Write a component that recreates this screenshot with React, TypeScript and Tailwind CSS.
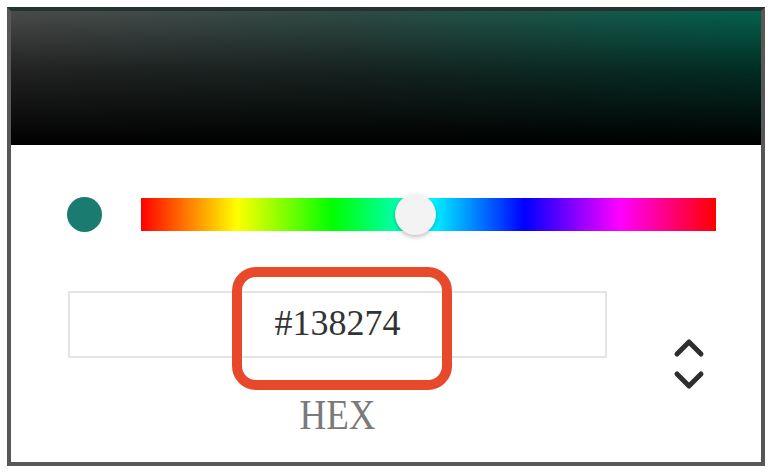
import React from "react";

export default function App() {
  return (
    <div className="relative w-[768px] h-[473px] bg-white overflow-hidden">
      <div className="ml-[7px] mt-[7px] w-[758px] h-[459px] border-4 border-[#575757] border-t-[#263230] flex flex-col">
        <div className="relative h-[134px] bg-[linear-gradient(to_right,#4a4a4a,#2f4a44_45%,#03614c)]">
          <div className="absolute inset-0 bg-[linear-gradient(to_bottom,rgba(0,0,0,0),rgba(0,0,0,0.55)_45%,#000)]" />
        </div>
        <div className="flex-1 flex flex-col">
          <div className="flex items-center pt-[52px]">
            <div className="ml-[56px] w-[35px] h-[35px] rounded-full bg-[#1a7b70]" />
            <div className="relative ml-[39px] w-[575px] h-[33px] bg-[linear-gradient(to_right,#ff0000,#ffff00_16.7%,#00ff00_33.3%,#00ffff_50%,#0000ff_66.7%,#ff00ff_83.3%,#ff0000)]">
              <div className="absolute left-[254px] top-[-4px] w-[41px] h-[41px] rounded-full bg-[#f3f3f3] shadow-[0_2px_4px_rgba(0,0,0,0.25)]" />
            </div>
          </div>
          <div className="flex mt-[59px]">
            <div className="flex flex-col items-center ml-[57px] w-[539px]">
              <div className="w-full h-[67px] border-2 border-[#e4e4e4] flex items-center justify-center pb-[4px]">
                <span className="font-['Liberation_Serif',serif] text-[36px] leading-none text-[#333]">#138274</span>
              </div>
              <span className="mt-[38px] font-['Liberation_Serif',serif] text-[37px] leading-none text-[#7a7a7a] scale-y-[1.15]">HEX</span>
            </div>
            <div className="ml-[66px] mt-[46px]">
              <svg width="32" height="54" viewBox="0 0 32 54" fill="none" stroke="#2e2e2e" strokeWidth="5" strokeLinecap="round" strokeLinejoin="round">
                <polyline points="4,17 16,5 28,17" />
                <polyline points="4,37 16,49 28,37" />
              </svg>
            </div>
          </div>
        </div>
      </div>
      <div className="absolute left-[232px] top-[267px] w-[220px] h-[123px] rounded-[24px] border-[10px] border-[#e8492a]" />
    </div>
  );
}
